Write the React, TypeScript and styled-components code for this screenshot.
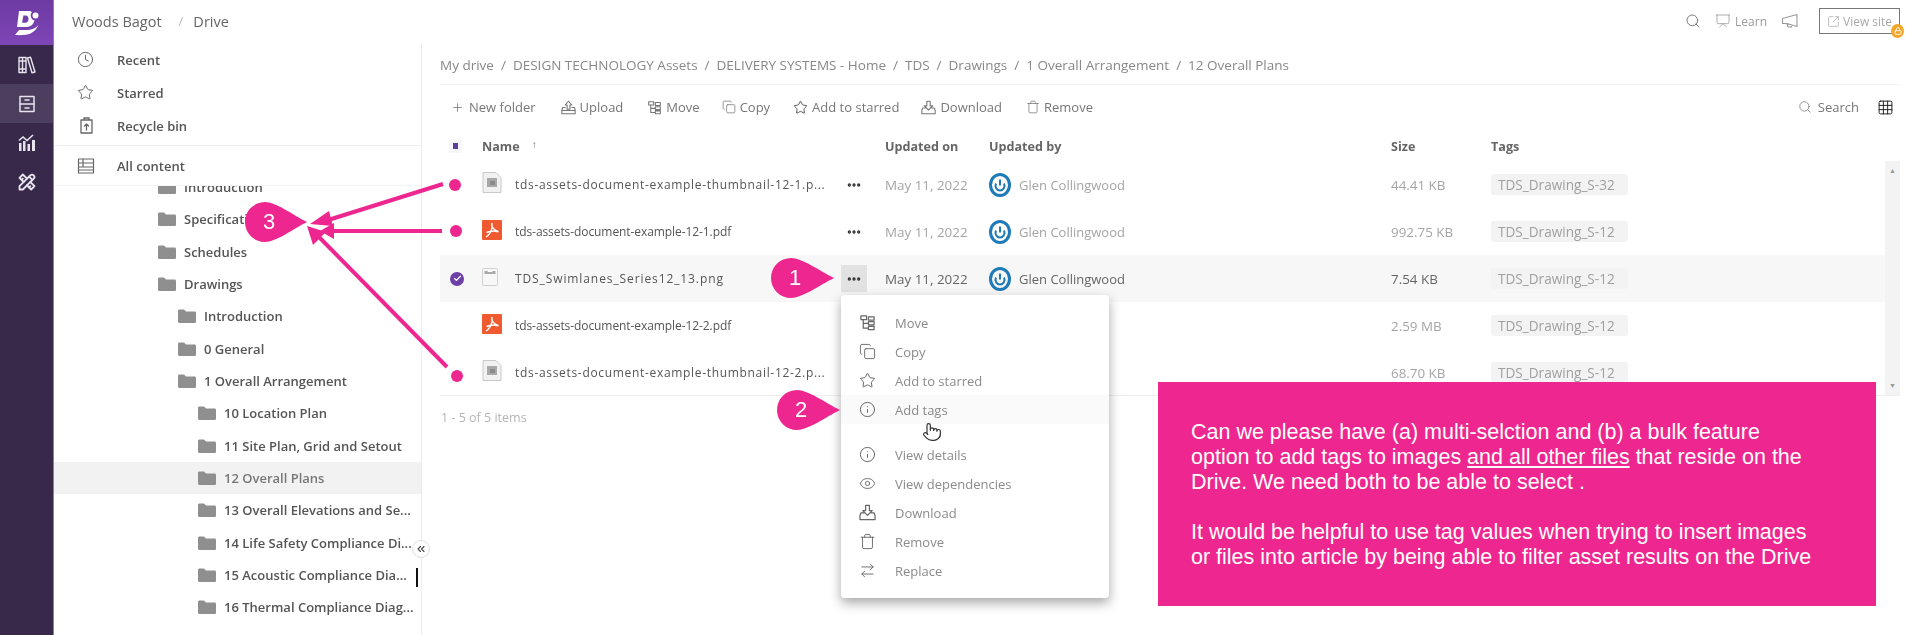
import React from "react";
import styled, { createGlobalStyle } from "styled-components";
import {
  Clock, Star, Search, Grid3x3, Presentation, SquareArrowOutUpRight, Lock, Info, Eye,
  Trash, ArrowRightLeft, Pointer, Plus, Copy, MoreHorizontal, Check, ChevronsLeft,
} from "lucide-react";
import { TbTools } from "react-icons/tb";

const Global = createGlobalStyle`
  html, body { margin: 0; padding: 0; background: #fff; overflow: hidden; }
  * { box-sizing: border-box; }
`;

const FONT = `"Open Sans", "Noto Sans", sans-serif`;

const Page = styled.div`
  position: relative;
  display: flex;
  width: 1907px;
  height: 635px;
  overflow: hidden;
  font-family: ${FONT};
  color: #555;
`;
const Blurred = styled.div`
  display: flex;
  width: 100%;
  height: 100%;
  filter: blur(0.4px);
`;
const Rail = styled.nav`
  flex: 0 0 54px;
  display: flex;
  flex-direction: column;
  background: #38294a;
  border-right: 1px solid #8b8494;
`;
const LogoCell = styled.div`
  height: 45px;
  display: flex;
  align-items: center;
  justify-content: center;
  background: linear-gradient(180deg, #6d3aa3 0%, #7e45b6 100%);
`;
const RailItem = styled.div<{ $active?: boolean }>`
  height: 39px;
  display: flex;
  align-items: center;
  justify-content: center;
  color: #e8e4ee;
  background: ${(p) => (p.$active ? "#4c3e5e" : "transparent")};
`;
const Main = styled.div`
  flex: 1;
  min-width: 0;
  display: flex;
  flex-direction: column;
`;
const TopBar = styled.header`
  height: 44px;
  flex: none;
  display: flex;
  align-items: center;
  padding: 0 7px 2px 18px;
`;
const Crumb = styled.span`
  font-size: 14.5px;
  font-weight: 500;
  color: #666;
`;
const CrumbSep = styled.span`
  margin: 0 10px 0 17px;
  font-size: 13px;
  color: #bbb;
`;
const TopRight = styled.div`
  margin-left: auto;
  display: flex;
  align-items: center;
  color: #999;
  font-size: 12px;
  font-weight: 500;
`;
const SearchGlyph = styled.span`
  display: flex;
  color: #777;
`;
const LearnLabel = styled.span`
  margin: 0 14px 0 4px;
`;
const ViewSite = styled.div`
  position: relative;
  margin-left: 20px;
  width: 81px;
  height: 26px;
  display: flex;
  align-items: center;
  gap: 3px;
  padding-left: 7px;
  border: 1px solid #777;
  color: #aaa;
  white-space: nowrap;
`;
const LockBadge = styled.span`
  position: absolute;
  right: -5px;
  top: 15px;
  width: 13px;
  height: 14px;
  border-radius: 50%;
  background: #f4a62a;
  color: #fff;
  display: flex;
  align-items: center;
  justify-content: center;
`;
const Panels = styled.div`
  flex: 1;
  min-height: 0;
  display: flex;
`;
const LeftPanel = styled.aside`
  position: relative;
  flex: 0 0 368px;
  display: flex;
  flex-direction: column;
  border-right: 1px solid #ececec;
`;
const NavList = styled.div`
  flex: none;
  height: 103px;
  margin-top: -1px;
  border-bottom: 1px solid #eee;
`;
const NavRow = styled.div`
  height: 33px;
  display: flex;
  align-items: center;
  padding-left: 23px;
  font-size: 13px;
  font-weight: 600;
  color: #555;
`;
const NavIcon = styled.span`
  flex: 0 0 40px;
  display: flex;
  color: #666;
`;
const AllContent = styled(NavRow)`
  height: 40px;
  flex: none;
  border-bottom: 1px solid #f4f4f4;
`;
const TreeClip = styled.div`
  flex: 1;
  min-height: 0;
  overflow: hidden;
`;
const Tree = styled.div`
  margin-top: -15px;
`;
const TreeRow = styled.div<{ $level: number; $selected?: boolean }>`
  height: 32.33px;
  display: flex;
  align-items: center;
  gap: 8px;
  padding-left: ${(p) => 104 + p.$level * 20}px;
  background: ${(p) => (p.$selected ? "#f2f2f2" : "transparent")};
  font-size: 13px;
  font-weight: 600;
  color: ${(p) => (p.$selected ? "#777" : "#555")};
`;
const TreeLabel = styled.span`
  white-space: nowrap;
`;
const CollapseButton = styled.div`
  position: absolute;
  right: -9px;
  top: 496px;
  width: 18px;
  height: 18px;
  border-radius: 50%;
  border: 1px solid #ddd;
  background: #fff;
  color: #444;
  display: flex;
  align-items: center;
  justify-content: center;
`;
const TextCaret = styled.div`
  position: absolute;
  left: 362px;
  top: 524px;
  width: 2px;
  height: 19px;
  background: #111;
`;
const Content = styled.section`
  position: relative;
  flex: 1;
  min-width: 0;
  padding: 0 7px 0 18px;
`;
const Breadcrumbs = styled.div`
  height: 41px;
  display: flex;
  align-items: center;
  border-bottom: 1px solid #f0f0f0;
  font-size: 13.5px;
  color: #888;
  padding-top: 2px;
  white-space: pre;
`;
const Toolbar = styled.div`
  height: 44px;
  display: flex;
  align-items: center;
  padding-left: 11px;
  font-size: 13px;
  color: #777;
`;
const ToolButton = styled.div<{ $gap?: number; $ml?: number }>`
  display: flex;
  align-items: center;
  gap: ${(p) => p.$gap ?? 4}px;
  margin-left: ${(p) => p.$ml ?? 0}px;
  white-space: nowrap;
`;
const ToolSpacer = styled.div`
  margin-left: auto;
  margin-right: 6px;
  display: flex;
  align-items: center;
`;
const GRID = "42px 33px 325px 45px 104px 402px 100px 1fr";
const HeadRow = styled.div`
  height: 32px;
  padding-top: 2px;
  display: grid;
  grid-template-columns: ${GRID};
  align-items: center;
  font-size: 12.6px;
  font-weight: 700;
  color: #666;
`;
const NameHead = styled.div`
  grid-column: 2 / 5;
  display: flex;
  gap: 12px;
  align-items: center;
`;
const SortArrow = styled.span`
  font-size: 10px;
  position: relative;
  top: -2px;
`;
const HeadBox = styled.div`
  width: 13px;
  height: 13px;
  margin-left: 9px;
  display: flex;
  align-items: center;
  justify-content: center;
  background: #f7f6fa;
  &::after {
    content: "";
    width: 5px;
    height: 6px;
    background: #5b3f9e;
  }
`;
const Rows = styled.div`
  position: relative;
  height: 235px;
  border-bottom: 1px solid #eee;
`;
const Row = styled.div<{ $hot?: boolean }>`
  height: 47px;
  display: grid;
  grid-template-columns: ${GRID};
  align-items: center;
  font-size: 13.4px;
  background: ${(p) => (p.$hot ? "#f7f7f7" : "transparent")};
  color: ${(p) => (p.$hot ? "#666" : "#a5a5a5")};
`;
const CheckCircle = styled.span`
  width: 14px;
  height: 14px;
  margin-left: 10px;
  border-radius: 50%;
  background: #6f3fa8;
  color: #fff;
  display: flex;
  align-items: center;
  justify-content: center;
`;
const FileName = styled.div<{ $spacing: number }>`
  color: #555;
  font-size: 12px;
  font-weight: 500;
  letter-spacing: ${(p) => p.$spacing}px;
  white-space: nowrap;
`;
const DotsCell = styled.div<{ $hot?: boolean }>`
  width: 26px;
  height: 27px;
  margin-left: 1px;
  display: flex;
  align-items: center;
  justify-content: center;
  color: #333;
  background: ${(p) => (p.$hot ? "#e2e2e2" : "transparent")};
`;
const ByCell = styled.div`
  display: flex;
  align-items: center;
  gap: 8px;
  font-size: 13px;
`;
const Chip = styled.span`
  display: inline-block;
  padding: 1px 7px;
  border-radius: 3px;
  background: #f3f3f3;
  color: #a0a0a0;
  width: 137px;
  font-size: 13.6px;
  white-space: nowrap;
`;
const Scrollbar = styled.div`
  position: absolute;
  right: 0;
  top: 0;
  bottom: 0;
  width: 15px;
  display: flex;
  flex-direction: column;
  justify-content: space-between;
  align-items: center;
  padding: 5px 0;
  background: #f3f3f3;
  color: #999;
  font-size: 7px;
`;
const Pagination = styled.div`
  padding: 13px 0 0 1px;
  font-size: 12.5px;
  color: #b4b4b4;
`;
const Menu = styled.div`
  position: absolute;
  left: 841px;
  top: 295px;
  width: 268px;
  height: 303px;
  padding-top: 13px;
  background: #fff;
  border-radius: 4px;
  box-shadow: 0 5px 12px rgba(0, 0, 0, 0.35);
  color: #8b8b8b;
  font-size: 13px;
  font-weight: 500;
  filter: blur(0.3px);
`;
const MenuItem = styled.div<{ $hot?: boolean }>`
  height: 29px;
  display: flex;
  align-items: center;
  padding-left: 18px;
  background: ${(p) => (p.$hot ? "#fafafa" : "transparent")};
`;
const MenuIcon = styled.span`
  flex: 0 0 36px;
  display: flex;
  color: #666;
`;
const MenuGap = styled.div`
  height: 16px;
`;
const Cursor = styled.div`
  position: absolute;
  left: 922px;
  top: 422px;
  color: #333;
  line-height: 0;
`;
const Callout = styled.div`
  position: absolute;
  left: 1158px;
  top: 382px;
  width: 718px;
  height: 224px;
  padding: 38px 0 0 33px;
  background: #ee268f;
  color: #fff;
  font-family: "Liberation Sans", Arial, sans-serif;
  font-size: 21.5px;
  line-height: 25px;
  white-space: nowrap;
`;
const Underlined = styled.span`
  text-decoration: underline;
`;
const PinBox = styled.div<{ $x: number; $y: number; $w: number }>`
  position: absolute;
  left: ${(p) => p.$x}px;
  top: ${(p) => p.$y}px;
  width: ${(p) => p.$w}px;
  height: 40px;
  color: #fff;
  font-family: "Liberation Sans", Arial, sans-serif;
  font-size: 22px;
`;
const PinShape = styled.svg`
  position: absolute;
  inset: 0;
`;
const PinLabel = styled.span`
  position: absolute;
  left: 14px;
  top: 0;
  width: 20px;
  height: 40px;
  line-height: 40px;
  text-align: center;
`;
const ArrowLayer = styled.svg`
  position: absolute;
  left: 0;
  top: 0;
  pointer-events: none;
`;

const G = { fill: "none", stroke: "currentColor", strokeWidth: 1.5, strokeLinejoin: "round" as const, strokeLinecap: "round" as const };

const Logo = () => (
  <svg width="26" height="26" viewBox="0 0 26 26">
    <path d="M5 1h10c1.200 0 2.200.3 3 .9-1.300 1.600-1.700 3.700-.9 5.600.6 1.500 1.900 2.600 3.400 3-.9 3.700-4 6.500-8.200 6.500H3L5 1z" fill="#fff" />
    <path d="M9.400 5.400l-1.300 7.400h3.200c2 0 3.200-1.600 3.200-3.900 0-2.200-1-3.500-2.800-3.500z" fill="#7441ac" />
    <circle cx="21.500" cy="5.500" r="3" fill="#fff" />
    <path d="M1 25c5 .4 12 .2 16-1.800 3-1.600 6-4.500 7.500-8.200-2.500 2.800-6 4.800-10.500 5H5z" fill="#fff" />
  </svg>
);
const Books = () => (
  <svg width="20" height="20" viewBox="0 0 20 20" {...G} strokeWidth={1.4}>
    <path d="M2 2.500h3.500v15H2zM5.500 2.500H9v15H5.500zM2 6h7M2 14h7M10.500 3l3-.8 4.500 14.800-3 .8z" />
  </svg>
);
const Drawer = () => (
  <svg width="20" height="20" viewBox="0 0 20 20" {...G}>
    <rect x="3" y="2.500" width="14" height="15" />
    <path d="M3 10h14M8 6h4M8 14h4" />
  </svg>
);
const ChartIcon = () => (
  <svg width="20" height="20" viewBox="0 0 20 20">
    <path d="M2 7.500l4-3.500 4 3.500 6-5.500" fill="none" stroke="currentColor" strokeWidth="1.600" />
    <path d="M2 10h2.500v8H2zM6 8h2.500v10H6zM10.500 11H13v7h-2.500zM15 7h3v11h-3z" fill="currentColor" />
  </svg>
);
const Megaphone = () => (
  <svg width="18" height="16" viewBox="0 0 18 16" {...G} strokeWidth={1.1}>
    <path d="M16 1.500v12L6 10.500H1.500v-5L16 1.500zM6 10.500l1 3.500h3.500l-.8-2.500" />
  </svg>
);
const RecycleBin = () => (
  <svg width="19" height="19" viewBox="0 0 19 19" {...G} strokeWidth={1.3}>
    <path d="M4 4h11v13H4zM7 4V2h5v2M9.500 14V8M7.500 10l2-2 2 2" />
  </svg>
);
const TableIcon = () => (
  <svg width="18" height="18" viewBox="0 0 18 18" {...G} strokeWidth={1.2}>
    <path d="M1.500 2h15v14h-15zM6 2v8M6 6h10.500M6 10h10.500M1.500 13h15M1.500 6H6M1.500 10H6" />
  </svg>
);
const Folder = () => (
  <svg width="18" height="14" viewBox="0 0 18 14">
    <path d="M0 2c0-1 .6-1.500 1.500-1.500H6L8 2.500h8.500c1 0 1.500.6 1.500 1.500v8.500c0 1-.6 1.500-1.500 1.500h-15C.6 14 0 13.400 0 12.500z" fill="#8f8f8f" />
  </svg>
);
const MoveIcon = ({ s = 15 }: { s?: number }) => (
  <svg width={s} height={s} viewBox="0 0 18 18" {...G} strokeWidth={1.3}>
    <path d="M2 2h6v4H2zM10 3h6v3.500h-6zM10 8h6v3.500h-6zM10 13h6v3.500h-6zM4.500 6v9H10M4.500 10H10" />
  </svg>
);
const UploadIcon = () => (
  <svg width="15" height="15" viewBox="0 0 18 18" {...G} strokeWidth={1.3}>
    <path d="M9 1.500l4 4.500h-2.300v5H7.300V6H5zM5 9H2l-1 3v4.500h16V12l-1-3h-3M1 12.500h16" />
  </svg>
);
const DownloadIcon = ({ s = 15 }: { s?: number }) => (
  <svg width={s} height={s} viewBox="0 0 18 18" {...G} strokeWidth={1.3}>
    <path d="M7 1.500h4V7h3l-5 5-5-5h3zM5 9.500H2l-1 3v4h16v-4l-1-3h-3" />
  </svg>
);
const ThumbIcon = () => (
  <svg width="20" height="21" viewBox="0 0 20 21">
    <path d="M1 .5h13l5 5v15H1z" fill="#f1f1f1" stroke="#c9c9c9" />
    <rect x="5" y="6" width="10" height="9" fill="#a8a8a8" />
    <rect x="8" y="9" width="5" height="4" fill="#8b8b8b" />
  </svg>
);
const PngIcon = () => (
  <svg width="16" height="18" viewBox="0 0 16 18">
    <rect x=".5" y=".5" width="15" height="17" rx="1" fill="#f7f7f7" stroke="#d0d0d0" />
    <rect x="2.500" y="3" width="11" height="3" fill="#a9a9a9" />
    <path d="M8 2l3 2H5z" fill="#fff" />
  </svg>
);
const PdfIcon = () => (
  <svg width="20" height="20" viewBox="0 0 20 20">
    <rect width="20" height="20" rx="1" fill="#ef5a30" />
    <path d="M10 3c-.8 3 1 6.500 6.500 8.800M10 7.500c-.6 4-3 7.500-6 9.500M4.500 12.500c3.500-1.500 8-2 11-.8" fill="none" stroke="#fff" strokeWidth="1.500" />
  </svg>
);
const Avatar = () => (
  <svg width="22" height="24" viewBox="0 0 22 24">
    <ellipse cx="11" cy="12" rx="9.500" ry="10.500" fill="none" stroke="#1f7ab8" strokeWidth="3" />
    <path d="M7 10.500a4.500 4.800 0 1 0 8 0M11 6.500v6" fill="none" stroke="#1f7ab8" strokeWidth="2" />
  </svg>
);

const Pin = ({ x, y, w, n }: { x: number; y: number; w: number; n: string }) => (
  <PinBox $x={x} $y={y} $w={w}>
    <PinShape width={w} height={40} viewBox={`0 0 ${w} 40`}>
      <path d={`M20 0C31 0 ${w - 14} 13 ${w} 20C${w - 14} 27 31 40 20 40A20 20 0 0 1 20 0z`} fill="#ee268f" />
    </PinShape>
    <PinLabel>{n}</PinLabel>
  </PinBox>
);

const tree: [number, string, boolean?][] = [
  [0, "Introduction"], [0, "Specifications"], [0, "Schedules"], [0, "Drawings"], [1, "Introduction"],
  [1, "0 General"], [1, "1 Overall Arrangement"], [2, "10 Location Plan"], [2, "11 Site Plan, Grid and Setout"],
  [2, "12 Overall Plans", true], [2, "13 Overall Elevations and Se..."], [2, "14 Life Safety Compliance Di..."],
  [2, "15 Acoustic Compliance Dia..."], [2, "16 Thermal Compliance Diag..."],
];

type FileRow = { name: string; kind: "thumb" | "pdf" | "png"; size: string; tag: string; spacing: number; hot?: boolean; underMenu?: boolean };
const files: FileRow[] = [
  { name: "tds-assets-document-example-thumbnail-12-1.p...", kind: "thumb", size: "44.41 KB", tag: "TDS_Drawing_S-32", spacing: 0.68 },
  { name: "tds-assets-document-example-12-1.pdf", kind: "pdf", size: "992.75 KB", tag: "TDS_Drawing_S-12", spacing: -0.08 },
  { name: "TDS_Swimlanes_Series12_13.png", kind: "png", size: "7.54 KB", tag: "TDS_Drawing_S-12", spacing: 0.9, hot: true },
  { name: "tds-assets-document-example-12-2.pdf", kind: "pdf", size: "2.59 MB", tag: "TDS_Drawing_S-12", spacing: -0.08, underMenu: true },
  { name: "tds-assets-document-example-thumbnail-12-2.p...", kind: "thumb", size: "68.70 KB", tag: "TDS_Drawing_S-12", spacing: 0.68, underMenu: true },
];

const crumbs = ["My drive", "DESIGN TECHNOLOGY Assets", "DELIVERY SYSTEMS - Home", "TDS", "Drawings", "1 Overall Arrangement", "12 Overall Plans"];

export default function App() {
  return (
    <Page>
      <Global />
      <Blurred>
        <Rail>
          <LogoCell><Logo /></LogoCell>
          <RailItem><Books /></RailItem>
          <RailItem $active><Drawer /></RailItem>
          <RailItem><ChartIcon /></RailItem>
          <RailItem><TbTools size={20} strokeWidth={2.2} /></RailItem>
        </Rail>
        <Main>
          <TopBar>
            <Crumb>Woods Bagot</Crumb>
            <CrumbSep>/</CrumbSep>
            <Crumb>Drive</Crumb>
            <TopRight>
              <SearchGlyph><Search size={16} strokeWidth={1.5} /></SearchGlyph>
              <ToolButton $ml={14}><Presentation size={16} strokeWidth={1.2} /></ToolButton>
              <LearnLabel>Learn</LearnLabel>
              <Megaphone />
              <ViewSite>
                <SquareArrowOutUpRight size={13} strokeWidth={1.3} />
                View site
                <LockBadge><Lock size={8} strokeWidth={2.5} /></LockBadge>
              </ViewSite>
            </TopRight>
          </TopBar>
          <Panels>
            <LeftPanel>
              <NavList>
                <NavRow><NavIcon><Clock size={17} strokeWidth={1.4} /></NavIcon>Recent</NavRow>
                <NavRow><NavIcon><Star size={17} strokeWidth={1.4} /></NavIcon>Starred</NavRow>
                <NavRow><NavIcon><RecycleBin /></NavIcon>Recycle bin</NavRow>
              </NavList>
              <AllContent><NavIcon><TableIcon /></NavIcon>All content</AllContent>
              <TreeClip>
                <Tree>
                  {tree.map(([level, label, selected], i) => (
                    <TreeRow key={i} $level={level} $selected={selected}>
                      <Folder />
                      <TreeLabel>{label}</TreeLabel>
                    </TreeRow>
                  ))}
                </Tree>
              </TreeClip>
              <CollapseButton><ChevronsLeft size={12} strokeWidth={2.2} /></CollapseButton>
              <TextCaret />
            </LeftPanel>
            <Content>
              <Breadcrumbs>
                {crumbs.map((c, i) => (
                  <span key={c}>{i > 0 ? "  /  " : ""}{c}</span>
                ))}
              </Breadcrumbs>
              <Toolbar>
                <ToolButton $gap={5}><Plus size={13} strokeWidth={1.5} />New folder</ToolButton>
                <ToolButton $ml={25}><UploadIcon />Upload</ToolButton>
                <ToolButton $ml={24}><MoveIcon />Move</ToolButton>
                <ToolButton $ml={22}><Copy size={14} strokeWidth={1.3} />Copy</ToolButton>
                <ToolButton $ml={23}><Star size={15} strokeWidth={1.4} color="#444" />Add to starred</ToolButton>
                <ToolButton $ml={22}><DownloadIcon />Download</ToolButton>
                <ToolButton $ml={24}><Trash size={14} strokeWidth={1.3} />Remove</ToolButton>
                <ToolSpacer>
                  <ToolButton $gap={6}><Search size={14} strokeWidth={1.3} />Search</ToolButton>
                  <ToolButton $ml={18}><Grid3x3 size={17} strokeWidth={1.4} color="#222" /></ToolButton>
                </ToolSpacer>
              </Toolbar>
              <HeadRow>
                <HeadBox />
                <NameHead>Name <SortArrow>↑</SortArrow></NameHead>
                <div>Updated on</div>
                <div>Updated by</div>
                <div>Size</div>
                <div>Tags</div>
              </HeadRow>
              <Rows>
                {files.map((f) => (
                  <Row key={f.name} $hot={f.hot}>
                    <div>{f.hot && <CheckCircle><Check size={9} strokeWidth={3.5} /></CheckCircle>}</div>
                    <div>{f.kind === "thumb" ? <ThumbIcon /> : f.kind === "pdf" ? <PdfIcon /> : <PngIcon />}</div>
                    <FileName $spacing={f.spacing}>{f.name}</FileName>
                    {f.underMenu ? <div /> : <DotsCell $hot={f.hot}><MoreHorizontal size={16} strokeWidth={3} /></DotsCell>}
                    {f.underMenu ? <div /> : <div>May 11, 2022</div>}
                    {f.underMenu ? <div /> : <ByCell><Avatar />Glen Collingwood</ByCell>}
                    <div>{f.size}</div>
                    <div><Chip>{f.tag}</Chip></div>
                  </Row>
                ))}
                <Scrollbar><span>▲</span><span>▼</span></Scrollbar>
              </Rows>
              <Pagination>1 - 5 of 5 items</Pagination>
            </Content>
          </Panels>
        </Main>
      </Blurred>
      <Menu>
        <MenuItem><MenuIcon><MoveIcon s={17} /></MenuIcon>Move</MenuItem>
        <MenuItem><MenuIcon><Copy size={17} strokeWidth={1.3} /></MenuIcon>Copy</MenuItem>
        <MenuItem><MenuIcon><Star size={17} strokeWidth={1.4} /></MenuIcon>Add to starred</MenuItem>
        <MenuItem $hot><MenuIcon><Info size={17} strokeWidth={1.4} /></MenuIcon>Add tags</MenuItem>
        <MenuGap />
        <MenuItem><MenuIcon><Info size={17} strokeWidth={1.4} /></MenuIcon>View details</MenuItem>
        <MenuItem><MenuIcon><Eye size={17} strokeWidth={1.3} /></MenuIcon>View dependencies</MenuItem>
        <MenuItem><MenuIcon><DownloadIcon s={17} /></MenuIcon>Download</MenuItem>
        <MenuItem><MenuIcon><Trash size={17} strokeWidth={1.3} /></MenuIcon>Remove</MenuItem>
        <MenuItem><MenuIcon><ArrowRightLeft size={17} strokeWidth={1.3} /></MenuIcon>Replace</MenuItem>
      </Menu>
      <Cursor><Pointer size={20} strokeWidth={1.4} fill="#fff" /></Cursor>
      <Callout>
        Can we please have (a) multi-selction and (b) a bulk feature<br />
        option to add tags to images <Underlined>and all other files</Underlined> that reside on the<br />
        Drive. We need both to be able to select .<br />
        <br />
        It would be helpful to use tag values when trying to insert images<br />
        or files into article by being able to filter asset results on the Drive
      </Callout>
      <ArrowLayer width={1907} height={635} viewBox="0 0 1907 635">
        <g stroke="#ee268f" strokeWidth="4" fill="#ee268f">
          <line x1="443" y1="184" x2="325" y2="221" />
          <line x1="442" y1="231" x2="328" y2="231" />
          <line x1="447" y1="367" x2="318" y2="236" />
        </g>
        <g fill="#ee268f">
          <polygon points="310,224 329,211 333,226" />
          <polygon points="320,231 334,223 334,239" />
          <polygon points="307,226 326,232 313,245" />
          <circle cx="455" cy="185" r="6" />
          <circle cx="456" cy="231" r="6" />
          <circle cx="457" cy="376" r="6" />
        </g>
      </ArrowLayer>
      <Pin x={245} y={202} w={62} n="3" />
      <Pin x={771} y={258} w={63} n="1" />
      <Pin x={777} y={390} w={63} n="2" />
    </Page>
  );
}
